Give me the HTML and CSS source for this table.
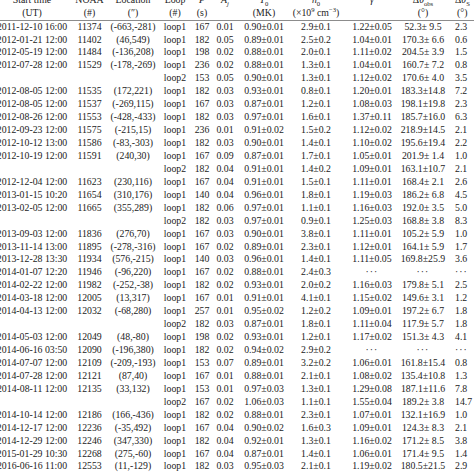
FILE: index.html
```html
<!DOCTYPE html>
<html>
<head>
<meta charset="utf-8">
<link rel="stylesheet" href="styles.css">
</head>
<body>
<table class="data">
<colgroup>
<col class="c-date"><col class="c-noaa"><col class="c-loc"><col class="c-loop"><col class="c-p"><col class="c-aj"><col class="c-t"><col class="c-n"><col class="c-g"><col class="c-dobs"><col class="c-d">
</colgroup>
<thead>
<tr class="h1">
<th>Start time</th><th>NOAA</th><th>Location</th><th>Loop</th><th><i>P</i></th><th><i>A<sub>j</sub></i></th><th><i>T</i><sub>0</sub></th><th><i>n</i><sub>0</sub></th><th><i>γ</i></th><th>Δ<i>θ</i><sub>obs</sub></th><th class="last">Δ<i>θ</i><sub>S</sub></th>
</tr>
<tr class="h2">
<th>(UT)</th><th>(#)</th><th>(″)</th><th>(#)</th><th>(s)</th><th></th><th>(MK)</th><th>(×10<sup>9</sup> cm<sup>−3</sup>)</th><th></th><th>(°)</th><th class="last">(°)</th>
</tr>
</thead>
<tbody>
<tr><td>2011-12-10 16:00</td><td>11374</td><td>(-663,-281)</td><td>loop1</td><td>167</td><td>0.01</td><td>0.90±0.01</td><td>2.9±0.1</td><td>1.22±0.05</td><td>52.3± 9.5</td><td class="last">2.3</td></tr>
<tr><td>2012-01-21 12:00</td><td>11402</td><td>(46,549)</td><td>loop1</td><td>182</td><td>0.05</td><td>0.89±0.01</td><td>2.5±0.2</td><td>1.04±0.01</td><td>170.3± 6.6</td><td class="last">0.6</td></tr>
<tr><td>2012-05-19 12:00</td><td>11484</td><td>(-136,208)</td><td>loop1</td><td>198</td><td>0.02</td><td>0.88±0.01</td><td>2.0±0.1</td><td>1.11±0.02</td><td>204.5± 3.9</td><td class="last">1.5</td></tr>
<tr><td>2012-07-28 12:00</td><td>11529</td><td>(-178,-269)</td><td>loop1</td><td>236</td><td>0.02</td><td>0.88±0.01</td><td>1.3±0.1</td><td>1.04±0.01</td><td>160.7± 7.2</td><td class="last">0.8</td></tr>
<tr><td></td><td></td><td></td><td>loop2</td><td>153</td><td>0.05</td><td>0.90±0.01</td><td>1.3±0.1</td><td>1.12±0.02</td><td>170.6± 4.0</td><td class="last">3.5</td></tr>
<tr><td>2012-08-05 12:00</td><td>11535</td><td>(172,221)</td><td>loop1</td><td>182</td><td>0.03</td><td>0.93±0.01</td><td>0.8±0.1</td><td>1.20±0.01</td><td>183.3±14.8</td><td class="last">7.2</td></tr>
<tr><td>2012-08-05 12:00</td><td>11537</td><td>(-269,115)</td><td>loop1</td><td>167</td><td>0.03</td><td>0.87±0.01</td><td>1.2±0.1</td><td>1.08±0.03</td><td>198.1±19.8</td><td class="last">2.3</td></tr>
<tr><td>2012-08-26 12:00</td><td>11553</td><td>(-428,-433)</td><td>loop1</td><td>182</td><td>0.03</td><td>0.97±0.01</td><td>1.6±0.1</td><td>1.37±0.11</td><td>185.7±16.0</td><td class="last">6.3</td></tr>
<tr><td>2012-09-23 12:00</td><td>11575</td><td>(-215,15)</td><td>loop1</td><td>236</td><td>0.01</td><td>0.91±0.02</td><td>1.5±0.2</td><td>1.12±0.02</td><td>218.9±14.5</td><td class="last">2.1</td></tr>
<tr><td>2012-10-12 13:00</td><td>11586</td><td>(-83,-303)</td><td>loop1</td><td>182</td><td>0.03</td><td>0.90±0.01</td><td>1.4±0.1</td><td>1.10±0.02</td><td>195.6±19.4</td><td class="last">2.2</td></tr>
<tr><td>2012-10-19 12:00</td><td>11591</td><td>(240,30)</td><td>loop1</td><td>167</td><td>0.09</td><td>0.87±0.01</td><td>1.7±0.1</td><td>1.05±0.01</td><td>201.9± 1.4</td><td class="last">1.0</td></tr>
<tr><td></td><td></td><td></td><td>loop2</td><td>182</td><td>0.04</td><td>0.91±0.01</td><td>1.4±0.2</td><td>1.09±0.01</td><td>163.1±10.7</td><td class="last">2.1</td></tr>
<tr><td>2012-12-04 12:00</td><td>11623</td><td>(230,116)</td><td>loop1</td><td>167</td><td>0.04</td><td>0.91±0.01</td><td>1.5±0.1</td><td>1.11±0.01</td><td>168.4± 2.1</td><td class="last">2.6</td></tr>
<tr><td>2013-01-15 10:20</td><td>11654</td><td>(310,176)</td><td>loop1</td><td>140</td><td>0.04</td><td>0.96±0.01</td><td>1.8±0.1</td><td>1.19±0.03</td><td>186.2± 6.8</td><td class="last">4.5</td></tr>
<tr><td>2013-02-05 12:00</td><td>11665</td><td>(355,289)</td><td>loop1</td><td>182</td><td>0.06</td><td>0.97±0.01</td><td>1.1±0.1</td><td>1.16±0.03</td><td>192.0± 3.5</td><td class="last">5.0</td></tr>
<tr><td></td><td></td><td></td><td>loop2</td><td>182</td><td>0.03</td><td>0.97±0.01</td><td>0.9±0.1</td><td>1.25±0.03</td><td>168.8± 3.8</td><td class="last">8.3</td></tr>
<tr><td>2013-09-03 12:00</td><td>11836</td><td>(276,70)</td><td>loop1</td><td>167</td><td>0.03</td><td>0.90±0.01</td><td>3.8±0.1</td><td>1.11±0.01</td><td>105.2± 5.9</td><td class="last">1.0</td></tr>
<tr><td>2013-11-14 13:00</td><td>11895</td><td>(-278,-316)</td><td>loop1</td><td>167</td><td>0.02</td><td>0.89±0.01</td><td>2.3±0.1</td><td>1.12±0.01</td><td>164.1± 5.9</td><td class="last">1.7</td></tr>
<tr><td>2013-12-28 13:30</td><td>11934</td><td>(576,-215)</td><td>loop1</td><td>140</td><td>0.03</td><td>0.96±0.01</td><td>1.4±0.1</td><td>1.11±0.05</td><td>169.8±25.9</td><td class="last">3.6</td></tr>
<tr><td>2014-01-07 12:20</td><td>11946</td><td>(-96,220)</td><td>loop1</td><td>167</td><td>0.02</td><td>0.88±0.01</td><td>2.4±0.3</td><td class="dots">···</td><td class="dots">···</td><td class="last dots">···</td></tr>
<tr><td>2014-02-22 12:00</td><td>11982</td><td>(-252,-38)</td><td>loop1</td><td>182</td><td>0.02</td><td>0.93±0.01</td><td>2.0±0.2</td><td>1.16±0.03</td><td>179.8± 5.1</td><td class="last">2.5</td></tr>
<tr><td>2014-03-18 12:00</td><td>12005</td><td>(13,317)</td><td>loop1</td><td>167</td><td>0.01</td><td>0.91±0.01</td><td>4.1±0.1</td><td>1.15±0.02</td><td>149.6± 3.1</td><td class="last">1.2</td></tr>
<tr><td>2014-04-13 12:00</td><td>12032</td><td>(-68,280)</td><td>loop1</td><td>257</td><td>0.01</td><td>0.95±0.02</td><td>1.2±0.2</td><td>1.09±0.01</td><td>197.2± 6.7</td><td class="last">1.8</td></tr>
<tr><td></td><td></td><td></td><td>loop2</td><td>182</td><td>0.03</td><td>0.87±0.01</td><td>1.8±0.1</td><td>1.11±0.04</td><td>117.9± 5.7</td><td class="last">1.8</td></tr>
<tr><td>2014-05-03 12:00</td><td>12049</td><td>(48,-80)</td><td>loop1</td><td>198</td><td>0.02</td><td>0.93±0.01</td><td>1.2±0.1</td><td>1.17±0.02</td><td>151.3± 4.3</td><td class="last">4.1</td></tr>
<tr><td>2014-06-16 03:50</td><td>12090</td><td>(-196,380)</td><td>loop1</td><td>182</td><td>0.02</td><td>0.94±0.02</td><td>2.9±0.2</td><td class="dots">···</td><td class="dots">···</td><td class="last dots">···</td></tr>
<tr><td>2014-07-07 12:00</td><td>12109</td><td>(-209,-193)</td><td>loop1</td><td>153</td><td>0.07</td><td>0.89±0.01</td><td>3.2±0.2</td><td>1.06±0.01</td><td>161.8±15.4</td><td class="last">0.8</td></tr>
<tr><td>2014-07-28 12:00</td><td>12121</td><td>(87,40)</td><td>loop1</td><td>167</td><td>0.01</td><td>0.88±0.01</td><td>2.1±0.1</td><td>1.08±0.02</td><td>135.4±10.8</td><td class="last">1.3</td></tr>
<tr><td>2014-08-11 12:00</td><td>12135</td><td>(33,132)</td><td>loop1</td><td>153</td><td>0.01</td><td>0.97±0.03</td><td>1.3±0.1</td><td>1.29±0.08</td><td>187.1±11.6</td><td class="last">7.8</td></tr>
<tr><td></td><td></td><td></td><td>loop2</td><td>167</td><td>0.02</td><td>1.06±0.03</td><td>1.1±0.1</td><td>1.55±0.04</td><td>189.2± 3.8</td><td class="last">14.7</td></tr>
<tr><td>2014-10-14 12:00</td><td>12186</td><td>(166,-436)</td><td>loop1</td><td>182</td><td>0.02</td><td>0.88±0.01</td><td>2.3±0.1</td><td>1.07±0.01</td><td>132.1±16.9</td><td class="last">1.0</td></tr>
<tr><td>2014-12-17 12:00</td><td>12236</td><td>(-35,492)</td><td>loop1</td><td>167</td><td>0.04</td><td>0.90±0.02</td><td>1.6±0.3</td><td>1.09±0.01</td><td>124.3± 8.3</td><td class="last">2.1</td></tr>
<tr><td>2014-12-29 12:00</td><td>12246</td><td>(347,330)</td><td>loop1</td><td>182</td><td>0.04</td><td>0.92±0.01</td><td>1.3±0.1</td><td>1.16±0.02</td><td>171.2± 8.5</td><td class="last">3.8</td></tr>
<tr><td>2015-01-29 10:30</td><td>12268</td><td>(275,-60)</td><td>loop1</td><td>167</td><td>0.04</td><td>0.87±0.01</td><td>1.4±0.1</td><td>1.06±0.01</td><td>171.4± 9.5</td><td class="last">1.4</td></tr>
<tr><td>2016-06-16 11:00</td><td>12553</td><td>(11,-129)</td><td>loop1</td><td>182</td><td>0.03</td><td>0.95±0.03</td><td>2.1±0.1</td><td>1.19±0.02</td><td>180.5±21.5</td><td class="last">2.9</td></tr>
</tbody>
</table>
</body>
</html>
```

FILE: styles.css
```css
html, body {
  margin: 0;
  padding: 0;
  overflow: hidden;
  background: #ffffff;
}

.data {
  table-layout: fixed;
  border-collapse: collapse;
  width: 491px;
  margin-left: -5px;
  margin-top: -6.3px;
  font-family: "Liberation Serif", "Times New Roman", serif;
  font-size: 9.8px;
  line-height: 12.94px;
  color: #222222;
}

.c-date { width: 74px; }
.c-noaa { width: 41px; }
.c-loc { width: 46px; }
.c-loop { width: 38px; }
.c-p { width: 16px; }
.c-aj { width: 30px; }
.c-t { width: 48px; }
.c-n { width: 56px; }
.c-g { width: 56px; }
.c-dobs { width: 46px; }
.c-d { width: 40px; }

.data th,
.data td {
  padding: 0;
  height: 12.94px;
  text-align: center;
  white-space: nowrap;
  font-weight: normal;
  vertical-align: top;
}

.data .last {
  text-align: left;
  padding-left: 9px;
}

.data .h2 th {
  border-bottom: 1px solid #8c8c8c;
}

.data .h2 th.last {
  padding-left: 11px;
}

.data sub,
.data sup {
  font-size: 0.68em;
  line-height: 0;
}

.data .dots {
  letter-spacing: 1px;
}
```
